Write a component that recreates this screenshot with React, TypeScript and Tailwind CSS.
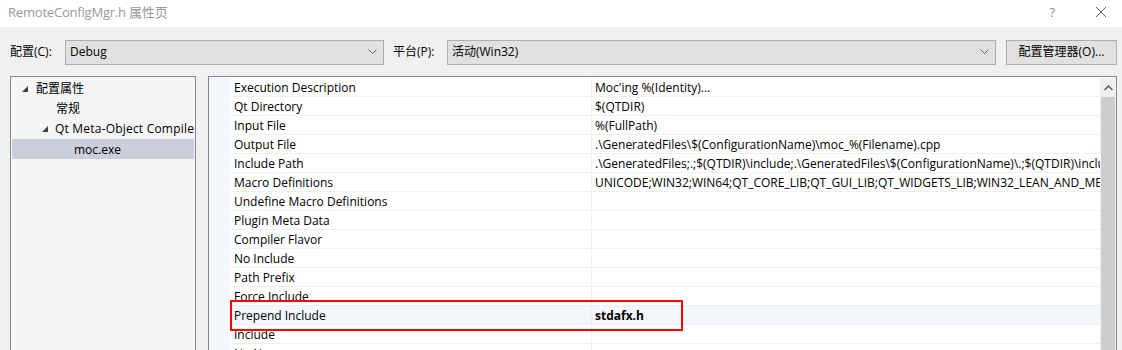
import React from "react";

const rows: { name: string; value: string; bold?: boolean; hl?: boolean }[] = [
  { name: "Execution Description", value: "Moc'ing %(Identity)..." },
  { name: "Qt Directory", value: "$(QTDIR)" },
  { name: "Input File", value: "%(FullPath)" },
  { name: "Output File", value: ".\\GeneratedFiles\\$(ConfigurationName)\\moc_%(Filename).cpp" },
  { name: "Include Path", value: ".\\GeneratedFiles;.;$(QTDIR)\\include;.\\GeneratedFiles\\$(ConfigurationName)\\.;$(QTDIR)\\include" },
  { name: "Macro Definitions", value: "UNICODE;WIN32;WIN64;QT_CORE_LIB;QT_GUI_LIB;QT_WIDGETS_LIB;WIN32_LEAN_AND_MEAN" },
  { name: "Undefine Macro Definitions", value: "" },
  { name: "Plugin Meta Data", value: "" },
  { name: "Compiler Flavor", value: "" },
  { name: "No Include", value: "" },
  { name: "Path Prefix", value: "" },
  { name: "Force Include", value: "" },
  { name: "Prepend Include", value: "stdafx.h", bold: true, hl: true },
  { name: "Include", value: "" },
  { name: "No Namespace", value: "" },
];

const Tri = () => (
  <svg width="6" height="6" viewBox="0 0 6 6" className="shrink-0">
    <polygon points="6,0 6,6 0,6" fill="#404040" />
  </svg>
);

const Chevron = () => (
  <svg width="9" height="6" viewBox="0 0 9 6">
    <polyline points="0.5,0.5 4.5,4.5 8.5,0.5" fill="none" stroke="#606060" strokeWidth="1" />
  </svg>
);

export default function App() {
  const font = { fontFamily: '"Open Sans", "Noto Sans CJK SC", sans-serif' };
  return (
    <div className="w-[1122px] h-[350px] overflow-hidden bg-[#f0f0f0] text-[12px] text-black leading-none relative" style={font}>
      <div className="h-[27px] bg-white flex items-center pl-[8px] pr-[10px] pb-[3px]">
        <span className="text-[13px] text-[#999999] tracking-[-0.2px]">RemoteConfigMgr.h 属性页</span>
        <div className="flex-1" />
        <span className="text-[13px] text-[#8a8a8a] mr-[40px]">?</span>
        <svg width="12" height="12" viewBox="0 0 12 12" className="mr-[5px]">
          <path d="M1 1 L11 11 M11 1 L1 11" stroke="#606060" strokeWidth="1" />
        </svg>
      </div>
      <div className="flex items-center h-[49px] pt-[1px] pl-[10px]">
        <span className="w-[55px]">配置(C):</span>
        <div className="w-[319px] h-[25px] border border-[#adadad] bg-[#e1e1e1] flex items-center pl-[4px] pr-[6px]">
          <span className="flex-1">Debug</span>
          <Chevron />
        </div>
        <span className="ml-[9px] w-[54px]">平台(P):</span>
        <div className="w-[549px] h-[25px] border border-[#adadad] bg-[#e1e1e1] flex items-center pl-[4px] pr-[6px]">
          <span className="flex-1">活动(Win32)</span>
          <Chevron />
        </div>
        <div className="ml-[10px] w-[111px] h-[25px] border border-[#adadad] bg-[#e1e1e1] flex items-center justify-center">
          配置管理器(O)...
        </div>
      </div>
      <div className="flex pl-[10px] gap-[12px]">
        <div className="w-[186px] h-[300px] shrink-0 border border-[#828790] bg-[#f5f5f5] pt-[1px] px-[1px] overflow-hidden">
          <div className="h-[20px] flex items-center pl-[10px] gap-[8px] pt-[1px]">
            <Tri />
            <span>配置属性</span>
          </div>
          <div className="h-[20px] flex items-center pl-[44px] pt-[1px]">常规</div>
          <div className="h-[20px] flex items-center pl-[30px] gap-[7px] whitespace-nowrap overflow-hidden pt-[1px] tracking-[0.2px]">
            <Tri />
            <span>Qt Meta-Object Compiler</span>
          </div>
          <div className="h-[20px] flex items-center pl-[62px] bg-[#cccedb] mt-[1px] pt-[1px]">moc.exe</div>
        </div>
        <div className="w-[909px] h-[300px] shrink-0 border border-[#828790] bg-white flex pt-[1px] overflow-hidden">
          <div className="w-[21px] shrink-0 bg-[#f3f6fb]" />
          <div className="flex-1 min-w-0 flex flex-col">
            {rows.map((r) => (
              <div key={r.name} className={`h-[19px] shrink-0 flex border-b border-[#f0f0f3] ${r.hl ? "bg-[#f3f6fb]" : ""}`}>
                <div className="w-[361px] shrink-0 pl-[4px] pt-[1px] flex items-center whitespace-nowrap">{r.name}</div>
                <div className={`flex-1 min-w-0 border-l border-[#f0f0f3] pl-[3px] pt-[1px] flex items-center whitespace-nowrap overflow-hidden ${r.bold ? "font-bold" : ""}`}>
                  {r.value}
                </div>
              </div>
            ))}
          </div>
          <div className="w-[16px] shrink-0 bg-[#f0f0f0] flex flex-col">
            <div className="h-[19px] flex items-center justify-center">
              <svg width="9" height="6" viewBox="0 0 9 6">
                <polyline points="0.5,5 4.5,1 8.5,5" fill="none" stroke="#606060" strokeWidth="1.5" />
              </svg>
            </div>
            <div className="flex-1 mx-[1px] bg-[#cdcdcd]" />
          </div>
        </div>
      </div>
      <div className="absolute left-[230px] top-[300px] w-[453px] h-[31px] border-2 border-[#ff0000]" />
    </div>
  );
}
